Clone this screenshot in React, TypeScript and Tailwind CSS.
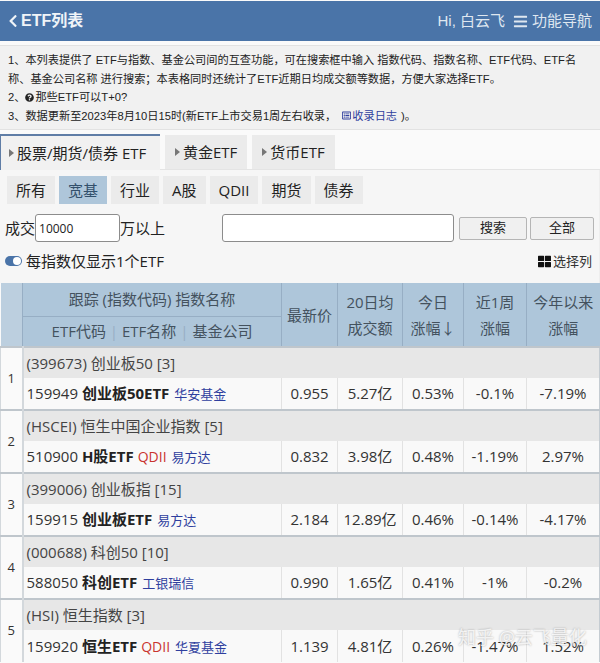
import React from 'react';
import { FaChevronLeft, FaBars, FaQuestionCircle, FaThLarge, FaRegListAlt } from 'react-icons/fa';

const tabs = [
  { label: '股票/期货/债券 ETF', active: true },
  { label: '黄金ETF', active: false },
  { label: '货币ETF', active: false },
];

const categories = ['所有', '宽基', '行业', 'A股', 'QDII', '期货', '债券'];

const rows = [
  { index: '(399673) 创业板50 [3]', code: '159949', name: '创业板50ETF', qdii: false, company: '华安基金', price: '0.955', volume: '5.27亿', today: '0.53%', week: '-0.1%', year: '-7.19%' },
  { index: '(HSCEI) 恒生中国企业指数 [5]', code: '510900', name: 'H股ETF', qdii: true, company: '易方达', price: '0.832', volume: '3.98亿', today: '0.48%', week: '-1.19%', year: '2.97%' },
  { index: '(399006) 创业板指 [15]', code: '159915', name: '创业板ETF', qdii: false, company: '易方达', price: '2.184', volume: '12.89亿', today: '0.46%', week: '-0.14%', year: '-4.17%' },
  { index: '(000688) 科创50 [10]', code: '588050', name: '科创ETF', qdii: false, company: '工银瑞信', price: '0.990', volume: '1.65亿', today: '0.41%', week: '-1%', year: '-0.2%' },
  { index: '(HSI) 恒生指数 [3]', code: '159920', name: '恒生ETF', qdii: true, company: '华夏基金', price: '1.139', volume: '4.81亿', today: '0.26%', week: '-1.47%', year: '1.52%' },
];

const App: React.FC = () => {
  return (
    <div className="relative w-[600px] h-[663px] overflow-hidden bg-[#fafafa] text-[#333] font-['Open_Sans','Noto_Sans_CJK_SC',sans-serif] pt-px">
      <header className="h-10 bg-[#4a74a8] flex items-center justify-between pl-2 pr-[8px] text-white font-['Liberation_Sans','Noto_Sans_CJK_SC',sans-serif]">
        <div className="flex items-center gap-[3px] font-bold text-[16px] text-[#f0f4f8]">
          <FaChevronLeft className="w-[10px] h-[14px]" />
          <span>ETF列表</span>
        </div>
        <div className="flex items-center text-[15px] text-[#dfe7f0]">
          <span>Hi, 白云飞</span>
          <FaBars className="w-[15px] h-[15px] ml-2 mr-[4px]" />
          <span>功能导航</span>
        </div>
      </header>

      <div className="mt-1 h-[85px] bg-[#f1f1f1] border-y border-[#e2e2e2] pl-2 pr-[22px] pt-[5px] text-[11.2px] leading-[18.5px] text-[#222] font-['Liberation_Sans','Noto_Sans_CJK_SC',sans-serif]">
        <p>1、本列表提供了 ETF与指数、基金公司间的互查功能，可在搜索框中输入 指数代码、指数名称、ETF代码、ETF名称、基金公司名称 进行搜索；本表格同时还统计了ETF近期日均成交额等数据，方便大家选择ETF。</p>
        <p className="flex items-center">2、<FaQuestionCircle className="w-[9px] h-[9px] mr-px" />那些ETF可以T+0?</p>
        <p className="flex items-center">
          3、数据更新至2023年8月10日15时(新ETF上市交易1周左右收录，
          <FaRegListAlt className="ml-[6px] w-[9px] h-[9px] text-[#2f3f9e]" />
          <span className="text-[#2f3f9e] ml-px">收录日志</span>
          <span className="ml-1">)。</span>
        </p>
      </div>

      <div className="mt-[4px] flex items-end gap-[5px] h-[36px] border-b border-[#e4e4e4]">
        {tabs.map((tab) => (
          <div
            key={tab.label}
            className={tab.active
              ? 'h-[36px] w-[160px] -mb-px bg-[#f1f1f1] border-t-2 border-l border-[#5f7da6] flex items-center pl-[8px] text-[15px] text-[#222]'
              : 'h-[34px] px-[10px] bg-[#ebebeb] flex items-center text-[15px] text-[#222]'}
          >
            <span className="w-0 h-0 border-y-[4px] border-y-transparent border-l-[5px] border-l-[#777] mr-[3px]" />
            {tab.label}
          </div>
        ))}
      </div>

      <div className="h-[113px] bg-[#f6f6f6] border-r border-[#eee] pl-[5px] pr-[5px] pt-[6px]">
        <div className="flex gap-[4px] pl-[2px]">
          {categories.map((cat) => (
            <div
              key={cat}
              className={`h-7 px-[9px] flex items-center text-[15px] ${cat === '宽基' ? 'bg-[#aec6da] text-[#33506b]' : 'bg-[#ebebeb] text-[#222]'}`}
            >
              {cat}
            </div>
          ))}
        </div>

        <div className="mt-[10px] flex items-center text-[15px] text-[#222] whitespace-nowrap">
          <span className="shrink-0">成交</span>
          <input
            readOnly
            value="10000"
            className="shrink-0 w-[85px] h-7 bg-white border border-[#8c8c8c] rounded-[3px] px-[3px] text-[12px] text-[#222]"
          />
          <span className="shrink-0">万以上</span>
          <input readOnly className="shrink-0 ml-[57px] w-[232px] h-7 bg-white border border-[#8c8c8c] rounded-[3px]" />
          <button className="shrink-0 ml-[5px] w-[68px] h-[23px] bg-[#f0f0f0] border border-[#b5b5b5] rounded-[2px] text-[13px]">搜索</button>
          <button className="shrink-0 ml-[3px] w-[64px] h-[23px] bg-[#f0f0f0] border border-[#b5b5b5] rounded-[2px] text-[13px]">全部</button>
        </div>

        <div className="mt-[8px] flex items-center justify-between">
          <div className="flex items-center text-[15px] text-[#222]">
            <span className="relative w-[17px] h-[10px] rounded-full bg-[#4a74a8] mr-[4px]">
              <span className="absolute right-px top-px w-2 h-2 rounded-full bg-white" />
            </span>
            每指数仅显示1个ETF
          </div>
          <div className="flex items-center text-[13px] text-[#333] pr-[2px]">
            <FaThLarge className="w-[13px] h-[13px] text-[#111] mr-[2px]" />
            选择列
          </div>
        </div>
      </div>

      <table className="w-[599px] table-fixed border-collapse text-[15px] text-[#333]">
        <colgroup>
          <col className="w-[22px]" />
          <col className="w-[259px]" />
          <col className="w-[56px]" />
          <col className="w-[65px]" />
          <col className="w-[61px]" />
          <col className="w-[63px]" />
          <col className="w-[73px]" />
        </colgroup>
        <thead className="bg-[#aec6da] text-[#44525e] text-[15px] leading-[26px]">
          <tr className="h-[33px]">
            <th rowSpan={2} className="font-normal border-r border-[#97aec4] bg-[#bccfdf]" />
            <th className="font-normal border-r border-b border-[#97aec4]">跟踪 (指数代码) 指数名称</th>
            <th rowSpan={2} className="font-normal border-r border-[#97aec4]">最新价</th>
            <th rowSpan={2} className="font-normal border-r border-[#97aec4]">20日均<br />成交额</th>
            <th rowSpan={2} className="font-normal border-r border-[#97aec4]">今日<br />涨幅↓</th>
            <th rowSpan={2} className="font-normal border-r border-[#97aec4]">近1周<br />涨幅</th>
            <th rowSpan={2} className="font-normal">今年以来<br />涨幅</th>
          </tr>
          <tr className="h-[31px]">
            <th className="font-normal border-r border-[#97aec4]">
              ETF代码 <span className="text-[#97aec4]">|</span> ETF名称 <span className="text-[#97aec4]">|</span> 基金公司
            </th>
          </tr>
        </thead>
        {rows.map((row, i) => (
          <tbody key={row.code} className="border-t-2 border-[#bfc6cc]">
            <tr className="h-[31px] bg-[#e7e7e7]">
              <td rowSpan={2} className="bg-[#fafafa] border-r-2 border-l border-[#d3d8dc] text-center text-[13px]">{i + 1}</td>
              <td colSpan={6} className="pl-[3px] text-[#444] border-r border-[#c5ccd2]">{row.index}</td>
            </tr>
            <tr className="h-[32px] bg-[#f9f9f9] text-center">
              <td className="text-left pl-[3px] border-r border-[#e2e2e2] whitespace-nowrap">
                {row.code} <b className="text-[#222]">{row.name}</b>
                {row.qdii && <span className="text-[#c9342f] text-[14px] ml-1">QDII</span>}
                <span className="text-[#2f3f9e] text-[13px] ml-[5px]">{row.company}</span>
              </td>
              <td className="border-r border-[#e2e2e2]">{row.price}</td>
              <td className="border-r border-[#e2e2e2]">{row.volume}</td>
              <td className="border-r border-[#e2e2e2]">{row.today}</td>
              <td className="border-r border-[#e2e2e2]">{row.week}</td>
              <td className="border-r border-[#c5ccd2]">{row.year}</td>
            </tr>
          </tbody>
        ))}
      </table>

      <div className="absolute left-[458px] top-[625px] text-[18px] leading-6 text-white/80 [text-shadow:0_0_2px_rgba(0,0,0,0.35)] whitespace-nowrap">知乎 @云飞量化</div>
    </div>
  );
};

export default App;
